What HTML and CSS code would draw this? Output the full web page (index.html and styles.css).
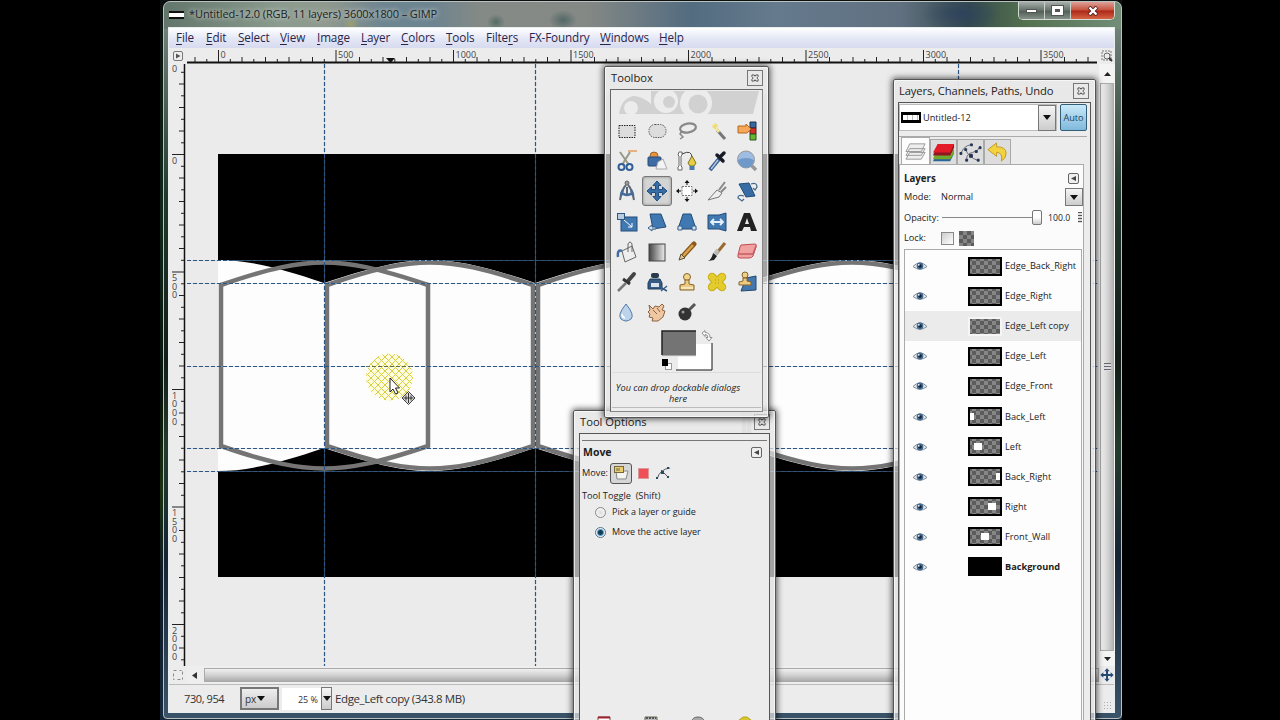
FILE: index.html
```html
<!DOCTYPE html>
<html lang="en">
<head>
<meta charset="utf-8">
<title>GIMP</title>
<link rel="stylesheet" href="styles.css">
</head>
<body>
<div class="desktop">
<svg width="0" height="0" class="defs">
  <defs>
    <pattern id="check" width="8" height="8" patternUnits="userSpaceOnUse"><rect width="8" height="8" fill="#868686"/><path d="M0 0h4v4H0zM4 4h4v4H4z" fill="#5c5c5c"/></pattern>
    <pattern id="mesh" width="7" height="7" patternUnits="userSpaceOnUse"><rect width="7" height="7" fill="#fffde0"/><path d="M0 0L7 7M7 0L0 7" stroke="#d9cf45" stroke-width="1"/></pattern>
    <linearGradient id="bw"><stop offset="0" stop-color="#444"/><stop offset="1" stop-color="#eee"/></linearGradient>
    <symbol id="move" viewBox="0 0 24 24"><path d="M12 2l4 4.500h-2.500v4h4V8l4.500 4-4.500 4v-2.500h-4v4H16L12 22l-4-4.500h2.500v-4h-4V16L2 12l4.500-4v2.500h4v-4H8z"/></symbol>
    <symbol id="eye" viewBox="0 0 16 12"><path d="M1 6.500Q8-1 15 6.500Q8 12 1 6.500z" fill="#e7edf2" stroke="#7d8994"/><circle cx="8" cy="6" r="3.400" fill="#466c90"/><circle cx="8" cy="6" r="1.800" fill="#10233a"/><circle cx="6.800" cy="4.800" r=".9" fill="#fff"/></symbol>
    <symbol id="close" viewBox="0 0 16 16"><path d="M4.500 4.500h2.500l1 1.500 1-1.500h2.500v2L10 8l1.500 1.500v2H9L8 10l-1 1.500H4.500v-2L6 8 4.500 6.500z" fill="none" stroke="#444"/></symbol>
  </defs>
</svg>

<main class="window">
  <header class="titlebar">
    <span class="app-thumb"></span><span class="title">*Untitled-12.0 (RGB, 11 layers) 3600x1800 – GIMP</span>
    <div class="controls"><span class="min"><i></i></span><span class="max"><i></i></span><span class="x"><svg width="12" height="10" viewBox="0 0 12 10"><path d="M2 1l8 8M10 1L2 9" stroke="#522" stroke-width="4"/><path d="M2.500 1.500l7 7M9.500 1.500l-7 7" stroke="#fff" stroke-width="2.400"/></svg></span></div>
  </header>
  <div class="client">
    <nav class="menu">
      <span style="width:30px"><u>F</u>ile</span><span style="width:32px"><u>E</u>dit</span><span style="width:42px"><u>S</u>elect</span><span style="width:37px"><u>V</u>iew</span><span style="width:44px"><u>I</u>mage</span><span style="width:40px"><u>L</u>ayer</span><span style="width:45px"><u>C</u>olors</span><span style="width:40px"><u>T</u>ools</span><span style="width:43px">Filte<u>r</u>s</span><span style="width:71px">FX-Foundry</span><span style="width:59px"><u>W</u>indows</span><span><u>H</u>elp</span>
    </nav>
    <div class="work">
      <div class="corner"><svg width="10" height="10"><rect x=".5" y=".5" width="9" height="9" rx="1.500" fill="#eee" stroke="#777"/><path d="M3 2.500l4.500 2.500L3 7.500z" fill="#555"/></svg></div>
      <svg class="ruler-h" width="912" height="16" id="rh"></svg>
      <div class="corner right"><svg width="12" height="12"><rect x="1" y="1" width="9" height="9" fill="none" stroke="#777" stroke-dasharray="2 1"/><circle cx="6" cy="6" r="3" fill="none" stroke="#666"/><path d="M8 8l3 3" stroke="#333" stroke-width="2"/></svg></div>
      <svg class="ruler-v" width="18" height="602" id="rv"></svg>
      <svg class="canvas" width="912" height="602" viewBox="187 64 912 602">
        <rect x="187" y="64" width="912" height="602" fill="#ebebeb"/>
        <rect x="218" y="154" width="847" height="423" fill="#000"/>
        <path fill="#fdfdfd" d="M218 260C248 260 280 268 324 283C370 268 400 260 430 260S490 268 535 283C581 268 611 260 641 260S701 268 746 283C792 268 822 260 852 260S912 268 958 283C1003 268 1035 260 1065 260V471C1035 471 1003 463 958 448C912 463 882 471 852 471S792 463 746 448C701 463 671 471 641 471S581 463 535 448C490 463 460 471 430 471S370 463 324 448C280 463 248 471 218 471z"/>
        <g fill="none" stroke="#747474" stroke-width="4.500">
          <path d="M221 285C270 268 298 262.500 324 262.500S378 268 428 285V446C378 463 350 468.500 324 468.500S270 463 221 446z"/>
          <path d="M327 285C376 268 404 262.500 430 262.500S484 268 533 285V446C484 463 456 468.500 430 468.500S376 463 327 446z"/>
          <path d="M538 285C587 268 615 262.500 641 262.500S695 268 744 285V446C695 463 667 468.500 641 468.500S587 463 538 446z"/>
          <path d="M749 285C798 268 826 262.500 852 262.500S906 268 955 285V446C906 463 878 468.500 852 468.500S798 463 749 446z"/>
        </g>
        <g stroke="#aab9cc" stroke-opacity=".35"><path d="M187 260.500H1099M187 283.500H1099M187 366.500H1099M187 448.500H1099M187 471.500H1099M324.500 64V666M535.500 64V666M958.500 64V666"/></g>
        <g stroke="#2a5685" stroke-width="1.200" stroke-dasharray="4 2"><path d="M187 260.500H1099M187 283.500H1099M187 366.500H1099M187 448.500H1099M187 471.500H1099M324.500 64V666"/><path d="M535.500 64V666"/><path d="M958.500 64V666"/></g>
        <circle cx="389.500" cy="377" r="23.500" fill="url(#mesh)"/><path d="M366 366.500h47" stroke="#58704f" stroke-dasharray="4 2"/>
        <path d="M390 378v14l3-3 2.500 5 2.500-1-2.500-5h4z" fill="#fff" stroke="#222"/>
        <path d="M408.500 391.500l6.500 6.500-6.500 6.500-6.500-6.500z" fill="#ddd" stroke="#444"/><path d="M408.500 393v10M403.500 398h10M406 395.500v5M411 395.500v5" stroke="#333"/>
      </svg>
      <div class="vscroll"><svg width="7" height="4"><path d="M0 4L3.500 0 7 4z" fill="#222"/></svg><div class="vthumb"><i></i></div><svg width="7" height="4"><path d="M0 0h7L3.500 4z" fill="#222"/></svg></div>
      <div class="corner low"><svg width="10" height="10"><rect x=".5" y=".5" width="9" height="9" fill="none" stroke="#888" stroke-dasharray="3 3 2 2"/></svg></div>
      <div class="hscroll"><svg width="5" height="7"><path d="M5 0v7L0 3.500z" fill="#333"/></svg><div class="hthumb"></div></div>
      <div class="corner nav"><svg width="16" height="16" fill="#254b73"><use href="#move"/></svg></div>
    </div>
    <footer class="status"><span class="pos">730, 954</span><span class="unit">px<b class="tri"></b></span><span class="zoom">25 %</span><span class="drop"><b class="tri"></b></span><span class="msg">Edge_Left copy (343.8 MB)</span><span class="grip"></span></footer>
  </div>
</main>

<section class="dock options">
  <header><span>Tool Options</span><svg class="closebtn"><use href="#close"/></svg></header>
  <div class="body">
    <div class="sep"></div>
    <div class="head"><b>Move</b><span class="menu-btn"><svg width="5" height="5"><path d="M5 0v5L0 2.500z" fill="#444"/></svg></span></div>
    <div class="targets"><span>Move:</span><span class="on"><svg width="16" height="16"><path d="M3 6l1 8h9l2-8z" fill="#f4f4f0" stroke="#888"/><rect x="1.500" y="1.500" width="9" height="6" fill="#e9cf70" stroke="#77683a"/><path d="M4 3v3M6 3v3" stroke="#665"/></svg></span><svg width="11" height="11"><rect x=".5" y=".5" width="10" height="10" fill="#ef5058" stroke="#d99"/></svg><svg width="16" height="16"><path d="M2 14Q5 4 15 3M6 5l7 7" fill="none" stroke="#556"/><path d="M1 12h2v2H1zM6 6h3v3H6zM12 2h2v2h-2zM12 11h2v2h-2z" fill="#254d5c"/></svg></div>
    <div class="toggle">Tool Toggle&nbsp; (Shift)</div>
    <div class="radio"><i></i>Pick a layer or guide</div>
    <div class="radio sel"><i></i>Move the active layer</div>
    <div class="foot">
      <svg width="14" height="8"><path d="M1 1h12v7H1z" fill="#fff" stroke="#654"/><path d="M1 1.500h12" stroke="#a52432" stroke-width="2"/></svg>
      <svg width="14" height="8"><path d="M1 1h12v7H1z" fill="#bbb" stroke="#665"/><path d="M2 2h10" stroke="#555" stroke-width="2" stroke-dasharray="2 1"/></svg>
      <svg width="14" height="8"><ellipse cx="7" cy="5" rx="6" ry="4" fill="#aaa" stroke="#666"/></svg>
      <svg width="14" height="8"><path d="M1 8V4l4-3h4l4 3v4z" fill="#d7c62f" stroke="#b5a422"/></svg>
    </div>
  </div>
</section>

<section class="dock toolbox">
  <header><span>Toolbox</span><svg class="closebtn"><use href="#close"/></svg></header>
  <div class="body">
    <svg class="wilber" width="148" height="26"><path d="M5 24Q7 9 19 6Q28 6 37 14V1H145L139 24z" fill="#d1d1d1"/><circle cx="52" cy="11" r="12" fill="#ececec"/><circle cx="55" cy="12" r="6" fill="#d1d1d1"/><circle cx="82" cy="13" r="16" fill="#ececec"/><circle cx="84" cy="14" r="9.500" fill="#d1d1d1"/><circle cx="17" cy="18" r="7" fill="#ececec"/></svg>
    <div class="tools">
      <svg viewBox="0 0 24 24"><rect x="4" y="6.500" width="16" height="12" fill="#ddd" stroke="#222" stroke-dasharray="1.500 1"/></svg>
      <svg viewBox="0 0 24 24"><rect x="4" y="5.500" width="17" height="13" rx="6" fill="#ddd" stroke="#555" stroke-dasharray="1.500 1"/></svg>
      <svg viewBox="0 0 24 24" fill="none"><ellipse cx="13" cy="9" rx="8" ry="4.500" transform="rotate(-10 13 9)" stroke="#888" stroke-width="2.200"/><path d="M7 12l-2 3 3 3-3 2" stroke="#888" stroke-width="1.500"/></svg>
      <svg viewBox="0 0 24 24"><path d="M12 11l8 9" stroke="#777" stroke-width="3"/><path d="M10 8l4 5" stroke="#eee6a0" stroke-width="3"/><path d="M10 4v6M7 7h6M12 5l-4 4" stroke="#f0d94a"/></svg>
      <svg viewBox="0 0 24 24"><path d="M15 3h6v6h-6z" fill="#3567a5" stroke="#234"/><path d="M15 9h6v6h-6z" fill="#d42f28" stroke="#522"/><path d="M15 15h6v6h-6z" fill="#68b72e" stroke="#252"/><path d="M3 7h8V5l5 5-4 4H3z" fill="#f6a85a" stroke="#b96619"/></svg>
      <svg viewBox="0 0 24 24" fill="none"><path d="M5 3l9 13M15 3L7 16" stroke="#999988" stroke-width="2"/><path d="M13 2h9" stroke="#e69d5e" stroke-width="1.500"/><circle cx="6.500" cy="18" r="3" stroke="#315f99" stroke-width="2"/><circle cx="14.500" cy="18" r="3" stroke="#315f99" stroke-width="2"/></svg>
      <svg viewBox="0 0 24 24"><circle cx="9" cy="7" r="4" fill="#e8943d" stroke="#9c642d"/><rect x="3" y="8" width="13" height="9" rx="1" fill="#3e6da6" stroke="#244a78"/><path d="M13 13l5-3 4 10H11z" fill="#f4f4f4" stroke="#aaa"/></svg>
      <svg viewBox="0 0 24 24"><path d="M4 3h3v3l-1 1v10l1 1v3H3v-3l1-1V7L3 6z" fill="#fff" stroke="#666"/><path d="M7 5q10-5 10 4" fill="none" stroke="#444"/><path d="M17 7l4 7-2 3h-4l-2-3z" fill="#e6ce42" stroke="#7d7324"/><rect x="14.500" y="17" width="5" height="4" fill="#4c78ae"/></svg>
      <svg viewBox="0 0 24 24"><path d="M14 10L5 21" stroke="#355d90" stroke-width="4"/><path d="M13 11l-7 9" stroke="#afc7df" stroke-width="1.500"/><path d="M12 6l6 6M15 8l4-4" stroke="#171b24" stroke-width="3.500" stroke-linecap="round"/></svg>
      <svg viewBox="0 0 24 24"><path d="M16 16l5 5" stroke="#999" stroke-width="3.500"/><circle cx="11" cy="10.500" r="8.500" fill="#9ebde0" stroke="#999"/><path d="M3 11q8-4 16 0-1 7-8 8-7-1-8-8" fill="#6e99c9"/></svg>
      <svg viewBox="0 0 24 24" fill="none"><circle cx="12" cy="4" r="2" fill="#999" stroke="#666"/><path d="M11 6Q7 10 5 21M13 6q4 4 6 15M12 8v8" stroke="#5d6976" stroke-width="2"/><path d="M8 11q-2 3-2 6M16 11q2 3 2 6M7 14q5 4 10 0" stroke="#466d99" stroke-width="2.500"/></svg>
      <svg viewBox="0 0 24 24" class="active" fill="#376da4" stroke="#1f4d80"><use href="#move"/></svg>
      <svg viewBox="0 0 24 24"><rect x="7" y="7.500" width="10" height="9" fill="#fff" stroke="#777" stroke-dasharray="2 1"/><path d="M12 1l2.500 3h-2v2h-1V4h-2zM12 23l2.500-3h-2v-2h-1v2h-2zM1 12l3-2.500v2h2v1H4v2zM23 12l-3-2.500v2h-2v1h2v2z" fill="#111"/></svg>
      <svg viewBox="0 0 24 24"><path d="M3 21L12 11l5 3-3 4z" fill="#eee" stroke="#777"/><path d="M14 11l6-8M16 13l5-5" stroke="#888" stroke-width="2"/></svg>
      <svg viewBox="0 0 24 24"><path d="M4 5l10-1 6 13-9 1z" fill="#376da4" stroke="#204a76"/><path d="M16 5q6-2 6 3l-2 3-2-2M9 17q-6-2-6 2l4 3 2-2" fill="#eee" stroke="#456c90" stroke-width="1.300"/></svg>
      <svg viewBox="0 0 24 24"><rect x="6" y="7" width="16" height="14" fill="#4078b2" stroke="#244c77"/><rect x="2.500" y="3.500" width="7" height="6" fill="#b9cde1" stroke="#2d5581"/><path d="M9 10l8 7m0-4v4h-4" fill="none" stroke="#fff"/></svg>
      <svg viewBox="0 0 24 24"><path d="M5 4h11l5 13-13 2z" fill="#4078b2" stroke="#244c77"/><path d="M3 18l4-3v2h4v2H7v2z" fill="#d5e0ec" stroke="#34618d"/></svg>
      <svg viewBox="0 0 24 24"><path d="M8 4h8l5 15H3z" fill="#4078b2" stroke="#244c77"/><path d="M3 16h4v4H3zM17 16h4v4h-4z" fill="#d6e0eb" stroke="#34618d"/></svg>
      <svg viewBox="0 0 24 24"><path d="M3 5h11l7-2v18l-7-2H3z" fill="#4078b2" stroke="#244c77"/><path d="M6 12h12M9 9l-3 3 3 3M15 9l3 3-3 3" fill="none" stroke="#e5f0f8" stroke-width="1.800"/></svg>
      <svg viewBox="0 0 24 24"><path d="M9 3h6l7 18h-6l-1-4H9l-2 4H2zM12 8l-2 6h4z" fill="#222" fill-rule="evenodd"/></svg>
      <svg viewBox="0 0 24 24"><path d="M7 11l10-5 4 11-11 5z" fill="#eee" stroke="#666"/><path d="M13 12V4q2-4 4 0v8" fill="none" stroke="#666"/><path d="M7 11q-5-2-4 6" fill="none" stroke="#3e6da5" stroke-width="2.500"/></svg>
      <svg viewBox="0 0 24 24"><rect x="4" y="4" width="16" height="17" fill="url(#bw)" stroke="#444"/></svg>
      <svg viewBox="0 0 24 24"><path d="M19 4L8 16" stroke="#8b591c" stroke-width="5" stroke-linecap="round"/><path d="M18 5L8 16" stroke="#d9a34e" stroke-width="2.500"/><path d="M4 20l2-6 4 4z" fill="#dcc399" stroke="#553"/></svg>
      <svg viewBox="0 0 24 24"><path d="M20 3l-9 11" stroke="#996a2d" stroke-width="3"/><path d="M13 10l-3 4" stroke="#bbb" stroke-width="4"/><path d="M8 13l4 3-3 4-6 1q4-2 5-8" fill="#222"/></svg>
      <svg viewBox="0 0 24 24"><path d="M6 5l14-1q2 0 1 3l-3 9q-1 2-4 2H5q-3 0-2-3l2-8z" fill="#f0a2a1" stroke="#c14d50"/><path d="M3 14h15l3-8" fill="none" stroke="#c65c60" stroke-width="1.500"/></svg>
      <svg viewBox="0 0 24 24"><path d="M19 4l-6 7" stroke="#444" stroke-width="4" stroke-linecap="round"/><path d="M8 9l7 5" stroke="#333" stroke-width="3"/><path d="M11 13L3 21" stroke="#777" stroke-width="2.500"/></svg>
      <svg viewBox="0 0 24 24"><rect x="6" y="3" width="8" height="5" rx="2" fill="#293a4c"/><path d="M5 9h10l2 4v6H3v-6z" fill="#355b85" stroke="#203c5c"/><path d="M6 13h8v4H6z" fill="#dbe3ea"/><path d="M15 17l7 4M16 21l6-5" stroke="#355b85" stroke-width="1.500"/></svg>
      <svg viewBox="0 0 24 24"><circle cx="12" cy="7" r="3.500" fill="#f0d48b" stroke="#866329"/><path d="M10 10h4v4l5 1v5H5v-5l5-1z" fill="#eccb81" stroke="#866329"/><path d="M6 18h12" stroke="#fff"/></svg>
      <svg viewBox="0 0 24 24"><path d="M7 7l10 10M17 7L7 17" stroke="#c7ac19" stroke-width="8.500" stroke-linecap="round"/><path d="M7 7l10 10M17 7L7 17" stroke="#e4cc2c" stroke-width="6.500" stroke-linecap="round"/><path d="M10 10h1M13 10h1M10 13h1M13 13h1" stroke="#ad9516"/></svg>
      <svg viewBox="0 0 24 24"><path d="M11 8l10-2v14l-15 1z" fill="#4477ad" stroke="#24486e"/><circle cx="10" cy="5" r="3" fill="#efd18a" stroke="#866329"/><path d="M8 8h4v3l4 1v3H4v-3l4-1z" fill="#eccb81" stroke="#866329"/></svg>
      <svg viewBox="0 0 24 24"><path d="M11 4q9 11 5 15-5 4-10 0-4-4 5-15z" fill="#bcd3ec" stroke="#517ba6"/><path d="M7 14q0 3 3 4" fill="none" stroke="#fff" stroke-width="1.500"/></svg>
      <svg viewBox="0 0 24 24"><path d="M4 5l4 4 2-3 4 1 3-3 2 2-2 4 3 1-2 6-5 4H7l1-3-4-1 1-3-2-2 2-2z" fill="#efc8a3" stroke="#8d623e"/><path d="M8 10l4 4M12 8l3 4" stroke="#8d623e"/></svg>
      <svg viewBox="0 0 24 24"><path d="M14 10l6-6" stroke="#555" stroke-width="3"/><circle cx="10" cy="14" r="6.500" fill="#333"/><circle cx="8" cy="12" r="1.500" fill="#999"/></svg>
    </div>
    <svg class="colors" width="52" height="41"><path d="M17 14H51V40H17z" fill="#fff"/><path d="M51 13V40H15" fill="none" stroke="#111"/><rect x="1" y="1" width="34" height="25" fill="#747474"/><path d="M1 25V1H35" fill="none" stroke="#222" stroke-width="1.500"/><path d="M35 26H1" stroke="#ddd"/><rect x="4.500" y="33.500" width="6" height="6" fill="#fff" stroke="#999"/><rect x="1" y="29" width="6" height="7" fill="#000"/><path d="M41 3l3-2.500v2q5 0 5 5h2l-3 3.500-3-3.500h2q0-3-3-3v2z" fill="#fff" stroke="#777" stroke-width=".8"/></svg>
    <div class="drop-hint">You can drop dockable dialogs<br>here</div>
  </div>
</section>

<section class="dock layers">
  <header><span>Layers, Channels, Paths, Undo</span><svg class="closebtn"><use href="#close"/></svg></header>
  <div class="body">
    <div class="image-row"><div class="select"><span class="app-thumb"></span><span>Untitled-12</span><span class="drop"><b class="tri"></b></span></div><button>Auto</button></div>
    <div class="tabs">
      <span class="cur"><svg viewBox="0 0 24 24" fill="#eee" stroke="#999"><path d="M6 13h16l-4 7H2zM6 9h16l-4 7H2zM6 4h16l-4 8H2z"/></svg></span>
      <span><svg viewBox="0 0 24 24"><path d="M5 13h18l-4 8H1z" fill="#2b6499"/><path d="M5 9h18v4l-4 6H1z" fill="#70a82d"/><path d="M6 3h17v4l-4 8H1z" fill="#8f1720"/><path d="M6 3h17l-4 9H1z" fill="#e31d28"/></svg></span>
      <span><svg viewBox="0 0 24 24" fill="none" stroke="#667"><path d="M2 13Q5 5 12 4M7 9q3 8 12 11M8 19q0-6 6-7t8-6"/><path d="M1 12h2v2H1zM12 3h2v2h-2zM21 6h2v2h-2zM6 8h2v2H6zM11 14h3v3h-3zM7 19h2v2H7zM19 19h2v2h-2zM17 10h2v2h-2z" fill="#235" stroke="#235"/></svg></span>
      <span><svg viewBox="0 0 24 24"><path d="M2 9l9-7v4q10 0 10 7 0 5-5 8 2-9-5-9v4z" fill="#f2d23d" stroke="#bf9a27"/></svg></span>
    </div>
    <div class="page">
      <div class="head"><b>Layers</b><span class="menu-btn"><svg width="5" height="5"><path d="M5 0v5L0 2.500z" fill="#444"/></svg></span></div>
      <div class="row mode"><span class="lab">Mode:</span><span>Normal</span><span class="drop"><b class="tri"></b></span></div>
      <div class="row opacity"><span class="lab">Opacity:</span><span class="track"><i></i></span><span class="val">100.0</span><span class="spin"></span></div>
      <div class="row lock"><span class="lab">Lock:</span><i class="box"></i><svg width="15" height="15"><rect width="15" height="15" fill="url(#check)"/></svg></div>
      <div class="list" id="list"></div>
    </div>
  </div>
</section>
</div>
<script src="script.js"></script>
</body>
</html>
```
FILE: styles.css
```css
*{box-sizing:border-box}
body{margin:0;background:#000;width:1280px;height:720px;overflow:hidden;font:12px/16px "Open Sans","Noto Sans",sans-serif;color:#222}
svg{display:block;flex:none}
u{text-underline-offset:2px;text-decoration-thickness:1px}
.defs{position:absolute}
.desktop{position:relative;width:962px;height:720px;margin-left:160px;overflow:hidden;background:linear-gradient(#0b100f,#10281a 30%,#06120c 55%,#18310f 68%,#0d1923 80%,#16283b)}
.window{position:absolute;left:3px;top:1px;width:959px;height:718px;border:1px solid #b9c2c1;border-radius:7px 7px 4px 4px;padding:0 6px 5px 4px;display:flex;flex-direction:column;overflow:hidden;background:radial-gradient(ellipse 9px 8px at 332px 20px,#49645ecc,transparent) no-repeat,radial-gradient(ellipse 14px 10px at 399px 18px,#455f60cc,transparent) no-repeat,radial-gradient(ellipse 40px 18px at 797px 12px,#2c4060cc,transparent) no-repeat,radial-gradient(ellipse 8px 7px at 187px 22px,#a9a560aa,transparent) no-repeat,linear-gradient(90deg,#63766b,#8b9b8e 12%,#91998e 17%,#6d8491 23%,#6d8491 28%,#848a85 33%,#858985 44%,#536c80 55%,#657a8d 64%,#607080 77%,#354b4b 84%,#53704f 90%,#728e77) 0 0/100% 27px no-repeat,linear-gradient(#7d8e86,#5d6f66 9%,#21392c 27%,#111d18 50%,#233b2d 62%,#152334 78%,#3a5368)}
.titlebar{height:25px;display:flex;align-items:center;color:#222;text-shadow:0 0 5px #bfc9c2,0 0 5px #bfc9c2}
.app-thumb{width:15px;height:8px;background:linear-gradient(#111 0 2px,#fff 2px 6px,#111 6px);flex:none}
.titlebar .app-thumb{margin-left:1px}
.title{margin-left:5px;font-size:11px;letter-spacing:-.1px;padding-bottom:1px}
.controls{display:flex;margin:0 0 7px auto;height:18px;border:1px solid #d5dad4;border-top:0;border-radius:0 0 5px 5px;overflow:hidden}
.controls span{width:26px;display:flex;align-items:center;justify-content:center;border-right:1px solid #ccd2cb;background:linear-gradient(#a8afab,#626f69 50%,#4f5d56 52%,#839087)}
.controls .x{width:43px;border:0;background:linear-gradient(#dda099,#c6523d 48%,#ad2617 52%,#d46545)}
.min i{width:11px;height:4px;background:#fff;border:1px solid #555}
.max i{width:11px;height:9px;border:3px solid #fff;outline:1px solid #555;background:#555}
.client{flex:1;background:#ececec;border:1px solid #e8eeee;display:flex;flex-direction:column;min-height:0}
.menu{height:20px;display:flex;padding:1px 0 0 7px;font-size:11.700px;letter-spacing:-.12px;color:#29244a;background:linear-gradient(#fff,#e3e6f5 55%,#d7dbef);white-space:nowrap;flex:none}
.menu span{flex:none}
.work{display:grid;grid-template-columns:18px 912px 16px;grid-template-rows:16px 602px 18px;height:636px;flex:none}
.corner{display:flex;align-items:center;justify-content:center;background:#ececec}
.work text{font:9px "Open Sans",sans-serif;fill:#444}
.vscroll{display:flex;flex-direction:column;align-items:center;padding:8px 0 5px;justify-content:space-between;background:#f4f4f4}
.vthumb{width:14px;height:568px;border:1px solid #aaa;background:linear-gradient(90deg,#f2f2f2,#d0d0d0 60%,#b5b5b5);display:flex;align-items:center;justify-content:center}
.vthumb i{width:7px;height:8px;background:repeating-linear-gradient(#667 0 1px,#ddd 1px 3px)}
.hscroll{display:flex;align-items:center;gap:7px;padding-left:5px;background:#eee}
.hthumb{height:14px;flex:1;border:1px solid #aaa;background:linear-gradient(#f0f0f0,#d2d2d2 50%,#acacac)}
.status{flex:1;display:flex;align-items:center;border-top:1px solid #bbb;color:#333;white-space:nowrap}
.pos{width:56px;margin-left:15px;letter-spacing:-.4px;font-size:11px}
.tri{width:0;height:0;border:4px solid transparent;border-top:5px solid #111;border-bottom:0}
.unit{width:39px;height:23px;border:2px solid #777;display:flex;align-items:center;padding-left:3px;font-size:10px;gap:1px;background:linear-gradient(#eee,#ccc)}
.zoom{width:39px;height:22px;margin-left:3px;background:#fff;font-size:9px;line-height:23px;text-align:right;padding-right:3px}
.drop{width:11px;height:23px;border:1px solid #777;background:linear-gradient(#f5f5f5,#ccc);display:flex;align-items:center;justify-content:center;flex:none}
.msg{margin-left:3px;font-size:11.500px;letter-spacing:-.4px}
.grip{width:8px;height:8px;margin:12px 3px 0 auto;background:radial-gradient(#aaa 1px,transparent 1px) 0 0/3px 3px}
.dock{position:absolute;border:1px solid #555;border-radius:2px;padding:0 5px 5px;background:linear-gradient(rgba(232,232,232,.94) 0 24px,rgba(226,226,226,.72) 32px);box-shadow:0 0 6px 1px rgba(0,0,0,.65),inset 0 0 0 1px rgba(255,255,255,.65);display:flex;flex-direction:column}
.dock>header{height:22px;display:flex;align-items:center;justify-content:space-between;font-size:11.200px;padding-left:1px;flex:none;white-space:nowrap}
.closebtn{width:16px;height:16px;border:1px solid #777;background:#e9e9e9}
.body{flex:1;border:1px solid #555;background:#ececec;min-height:0;font-size:9.200px;line-height:12px;white-space:nowrap}
.toolbox{left:444px;top:66px;width:165px;height:352px}
.toolbox .body{border-color:#666 #888 #888 #666;display:flex;flex-direction:column}
.wilber{margin:0 0 0 3px}
.tools{display:grid;grid-template-columns:repeat(5,30px);grid-auto-rows:30.200px;margin-left:1px}
.tools svg{width:24px;height:24px;margin:3px 3px 3px 2.500px}
.tools .active{width:30px;height:30px;margin:0;padding:2px;border:1px solid #777;border-radius:3px;background:#d4d4d4;box-shadow:inset 0 0 3px #888}
.colors{margin:3px 0 0 50px}
.drop-hint{flex:1;margin:1px 1px 3px;border-top:1px solid #ddd;border-bottom:1px solid #bbb;text-align:center;font-style:italic;line-height:11px;padding-top:9px;padding-right:17px}
.options{left:413px;top:410px;width:203px;height:321px}
.options .body{padding:0 2px}
.sep{height:7px;border-bottom:1px solid #777}
.head{display:flex;justify-content:space-between;align-items:center;font-size:9.700px}
.options .head{height:22px;padding:0 5px 0 1px;font-size:10.500px}
.menu-btn{width:11px;height:11px;border:1px solid #666;border-radius:2px;display:flex;align-items:center;justify-content:center;background:#eee}
.targets{height:20px;display:flex;align-items:center;gap:6px}
.targets .on{width:22px;height:21px;border:1px solid #555;border-radius:3px;background:#d6d6d6;display:flex;align-items:center;justify-content:center;margin-left:-4px}
.toggle{height:27px;padding-top:7px}
.radio{height:20px;display:flex;align-items:center;gap:6px;margin:0 0 0 13px;font-size:9px}
.toggle+.radio{margin-top:-8px}
.radio i{width:11px;height:11px;border:1px solid #888;border-radius:50%;background:radial-gradient(#ddd,#fff)}
.radio.sel i{border-color:#587583;background:radial-gradient(#123d59 0 2px,#5c9fc4 3px,#eef 4px)}
.foot{display:flex;gap:33px;margin:174px 0 0 15px}
.layers{left:733px;top:79px;width:203px;height:653px;padding:0 4px}
.layers>header{font-size:11.200px;letter-spacing:-.1px}
.layers .body{padding:1px 0 0}
.layers .closebtn{margin-right:2px}
.image-row{height:33px;display:flex;gap:3px;border-bottom:1px solid #aaa;margin:0 3px 0 0}
.select{display:flex;align-items:center;width:158px;height:27px;background:#fff;border:1px solid #bbb;gap:2px;padding-left:1px}
.select .app-thumb{width:20px;height:11px;border:solid #000;border-width:3px 2px;background:repeating-linear-gradient(90deg,#fff 0 4px,#bbb 4px 5px)}
.select .drop{width:18px;height:26px;margin-left:auto}
.image-row button{width:27px;height:27px;border:1px solid #315f79;border-radius:2px;background:linear-gradient(#c9e9f8,#80b9dc);padding:0;font:9.200px "Open Sans",sans-serif;color:#24465a}
.tabs{height:26px;display:flex;align-items:flex-end;margin:1px 0 0 2px}
.tabs span{width:27px;height:25px;border:1px solid #aaa;border-bottom:0;background:#ddd;display:flex;align-items:center;justify-content:center}
.tabs .cur{width:29px;height:27px;background:#fdfdfd}
.tabs svg{width:23px;height:23px}
.page{height:560px;margin-right:6px;border:1px solid #aaa;background:#fbfbfb;padding:5px 0 0 4px}
.page .head{height:17px;padding:0 4px 0 0}
.row{display:flex;align-items:center;height:20px}
.mode .lab{width:37px}
.mode .drop{margin-left:auto;width:18px;height:18px}
.opacity{height:21px}
.opacity .lab{width:38px}
.track{width:100px;height:1px;background:#888;position:relative}
.track i{position:absolute;right:0;top:-7px;width:10px;height:15px;border:1px solid #777;border-radius:2px;background:linear-gradient(#fff 50%,#ccc)}
.val{margin-left:6px;font-size:8.700px}
.spin{width:4px;height:11px;margin:0 1px 0 auto;background:repeating-linear-gradient(#555 0 1px,#ddd 1px 3px)}
.lock .lab{width:37px}
.box{width:13px;height:13px;border:1px solid #888;background:linear-gradient(135deg,#ccc,#fff);margin-right:5px}
.list{height:490px;margin:1px 1px 0 0;border:1px solid #aaa;background:#fdfdfd;padding-top:1px}
.layer{height:30.100px;display:flex;align-items:center;padding-left:7px}
.layer .thumb{margin:0 3px 0 40px}
.layer.selected{background:#ebebeb}
.layer b{font-size:9.200px}
```
FILE: script.js
```js
const list = document.getElementById('list');
// [name, white patch x, white patch width]
const layers = [['Edge_Back_Right'], ['Edge_Right'], ['Edge_Left copy'], ['Edge_Left'], ['Edge_Front'], ['Back_Left', 2, 4], ['Left', 6, 8], ['Back_Right', 28, 4], ['Right', 20, 8], ['Front_Wall', 13, 8], ['Background']];
list.innerHTML = layers.map(([name, x, w]) => {
  const base = name === 'Background', sel = name === 'Edge_Left copy';
  const patch = w ? `<rect x="${x}" y="6" width="${w}" height="7" fill="#fff"/>` : '';
  const tag = base ? 'b' : 'span';
  return `<div class="layer${sel ? ' selected' : ''}"><svg width="16" height="12"><use href="#eye"/></svg><svg class="thumb" width="34" height="19"><rect width="34" height="19" fill="${sel ? '#f5f5f5' : '#000'}"/>${base ? '' : '<rect x="2" y="2" width="30" height="15" fill="url(#check)"/>'}${patch}</svg><${tag}>${name}</${tag}></div>`;
}).join('');

// Rulers: one tick per 50 image pixels, 23.5 screen pixels per 100
const step = 11.75;
let h = '<path d="M0 14.500H910" stroke="#111" stroke-width="2"/>';
for (let i = -2; i < 78; i++) {
  const x = 31.5 + i * step;
  if (x > 908) break;
  const len = i % 10 === 0 ? 12 : i % 2 === 0 ? 5 : 3;
  h += `<path d="M${x.toFixed(1)} ${14 - len}V14" stroke="#222"/>`;
  if (i % 10 === 0) h += `<text x="${x + 2}" y="10">${i * 50}</text>`;
}
h += '<path d="M199 10h9l-4.500 5z" fill="#111"/>';
document.getElementById('rh').innerHTML = h;

let v = '<path d="M15.500 0V602" stroke="#111" stroke-width="1.500"/><text x="3" y="8">0</text>';
for (let i = -7; i < 44; i++) {
  const y = 90.5 + i * step;
  if (y > 600) break;
  const len = i % 10 === 0 ? 12 : i % 2 === 0 ? 5 : 3;
  v += `<path d="M${15 - len} ${y.toFixed(1)}H15" stroke="#222"/>`;
  if (i % 10 === 0) String(i * 50).split('').forEach((d, k) => { v += `<text x="3" y="${y + 9 + k * 8.7}">${d}</text>`; });
}
document.getElementById('rv').innerHTML = v;
```
